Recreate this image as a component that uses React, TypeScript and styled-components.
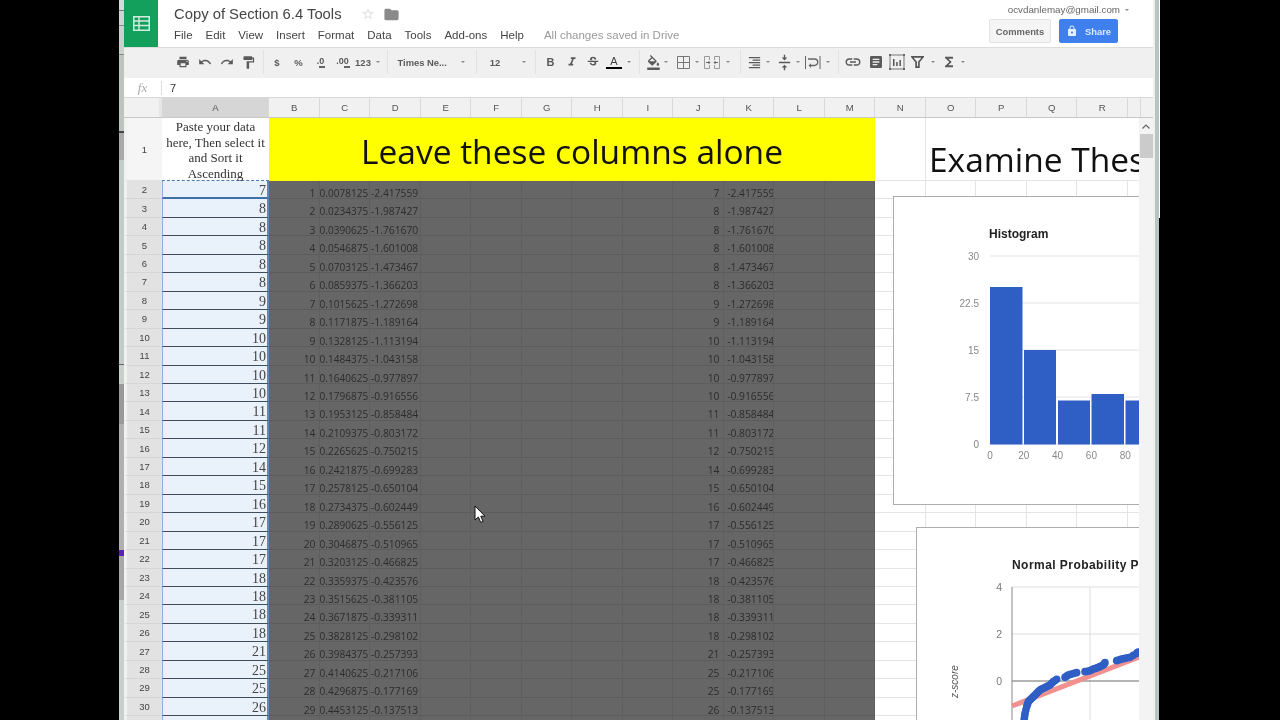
import React from 'react';
import styled, { createGlobalStyle } from 'styled-components';
import {
  MdArticle,
  MdFolder,
  MdFormatAlignRight,
  MdFormatColorFill,
  MdFormatItalic,
  MdFormatPaint,
  MdFunctions,
  MdLink,
  MdLock,
  MdPrint,
  MdRedo,
  MdStarBorder,
  MdStrikethroughS,
  MdUndo,
  MdVerticalAlignCenter,
} from 'react-icons/md';

const SANS = '"Liberation Sans", Arial, sans-serif';
const ROW_HEIGHT = 18.46;
const COL_WIDTH = 50.5;

const GlobalStyle = createGlobalStyle`
  html, body { margin: 0; height: 100%; background: #000; overflow: hidden; }
  #root { height: 720px; filter: blur(0.35px); }
`;

const Screen = styled.div`
  display: flex;
  width: 1280px;
  height: 720px;
  padding-left: 119px;
  box-sizing: border-box;
  background: #000;
  overflow: hidden;
  font-family: ${SANS};
`;

const LeftSliver = styled.div`
  position: relative;
  width: 5px;
  flex: none;
  background: linear-gradient(
    to bottom,
    #d4dad6 0, #d4dad6 10px, #777 10px, #777 11px, #cfd6d2 11px, #cfd6d2 25px, #888 25px, #888 26px,
    #c9d1cd 26px, #c9d1cd 54px, #888 54px, #888 55px, #bcc4c0 55px, #bcc4c0 131px, #444 131px, #444 133px,
    #aaa 133px, #aaa 160px, #c3ccc8 160px, #c3ccc8 364px, #666 364px, #666 365px, #c8d0cc 365px, #c8d0cc 384px,
    #999 384px, #999 424px, #b0b0b0 424px, #b0b0b0 550px, #5a1fc0 550px, #5a1fc0 556px, #a8a8a8 556px, #a8a8a8 600px,
    #c6cfcb 600px, #c6cfcb 720px
  );
`;

const Window = styled.div`
  display: flex;
  flex-direction: column;
  width: 1029px;
  flex: none;
  background: #fff;
  overflow: hidden;
`;

const RightEdge = styled.div`
  width: 7px;
  flex: none;
  background: linear-gradient(
    to right,
    #f0f0f0 0, #f0f0f0 2px, #b8c4c4 2px, #b8c4c4 6px, transparent 6px
  );
  position: relative;

  &::after {
    content: '';
    position: absolute;
    top: 0;
    right: 0;
    width: 1px;
    height: 218px;
    background: #fff;
  }
`;

const Header = styled.header`
  display: flex;
  height: 48px;
  flex: none;
  border-bottom: 1px solid #dcdcdc;
  box-sizing: border-box;
`;

const Logo = styled.div`
  display: flex;
  align-items: center;
  justify-content: center;
  width: 34px;
  background: #12a05c;
`;

const TitleBlock = styled.div`
  display: flex;
  flex-direction: column;
  padding-left: 16px;
`;

const TitleRow = styled.div`
  display: flex;
  align-items: center;
  height: 28px;
`;

const Title = styled.div`
  font-size: 14.8px;
  color: #444;
  width: 187px;
`;

const MenuRow = styled.div`
  display: flex;
  align-items: center;
  gap: 13px;
  height: 14px;
  font-size: 11.5px;
  color: #444;
`;

const SavedNote = styled.span`
  margin-left: 7px;
  color: #999;
`;

const Account = styled.div`
  display: flex;
  flex-direction: column;
  align-items: flex-end;
  margin-left: auto;
  padding-right: 23px;
`;

const Email = styled.div`
  display: flex;
  align-items: center;
  gap: 4px;
  height: 19px;
  font-size: 9.8px;
  color: #666;
`;

const ButtonRow = styled.div`
  display: flex;
  gap: 8px;
  padding-right: 12px;
`;

const Button = styled.div<{ $primary?: boolean }>`
  display: flex;
  align-items: center;
  justify-content: center;
  gap: 7px;
  height: 24px;
  width: ${(p) => (p.$primary ? 59 : 62)}px;
  box-sizing: border-box;
  border-radius: 2px;
  font-size: 9.4px;
  font-weight: 700;
  color: ${(p) => (p.$primary ? '#dbe8fd' : '#666')};
  background: ${(p) => (p.$primary ? '#3f80ee' : '#f5f5f5')};
  border: 1px solid ${(p) => (p.$primary ? '#3f80ee' : '#e2e2e2')};
`;

const Toolbar = styled.div`
  display: flex;
  align-items: center;
  height: 30px;
  flex: none;
  box-sizing: border-box;
  padding: 0 0 2px 47.5px;
  background: #f0f0f0;
  color: #555;
`;

const Tool = styled.div<{ $w: number; $l?: number }>`
  display: flex;
  align-items: center;
  justify-content: center;
  position: relative;
  flex: none;
  width: ${(p) => p.$w}px;
  margin-left: ${(p) => p.$l ?? 0}px;
  font-size: 9.5px;
  font-weight: 700;
  color: #5a5a5a;
`;

const FontName = styled(Tool)`
  justify-content: flex-start;
  font-size: 9.4px;
`;

const BoldGlyph = styled(Tool)`
  font-size: 11px;
`;

const Caret = styled.div<{ $w: number }>`
  display: flex;
  justify-content: center;
  flex: none;
  width: ${(p) => p.$w}px;

  &::after {
    content: '';
    border-left: 2px solid transparent;
    border-right: 2px solid transparent;
    border-top: 2px solid #888;
  }
`;

const Sep = styled.div<{ $l: number; $r: number }>`
  width: 1px;
  height: 24px;
  flex: none;
  margin: 0 ${(p) => p.$r}px 0 ${(p) => p.$l}px;
  background: #e2e2e2;
`;

const Decimal = styled.span`
  position: relative;
  font-size: 9px;
  padding-bottom: 3px;

  &::after {
    content: '';
    position: absolute;
    right: -1px;
    bottom: 1px;
    width: 6px;
    height: 2px;
    background: #666;
  }
`;

const ColorA = styled.span`
  font-size: 11px;
  font-weight: 400;
  padding: 0 4px;
  color: #444;
  border-bottom: 2.5px solid #000;
  line-height: 12px;
`;

const FormulaBar = styled.div`
  display: flex;
  align-items: center;
  height: 20px;
  flex: none;
  background: #fff;
  border-bottom: 1px solid #d8d8d8;
  box-sizing: border-box;
  font-size: 11px;
  color: #333;
`;

const FxLabel = styled.div`
  width: 37px;
  text-align: center;
  font-family: "Liberation Serif", serif;
  font-style: italic;
  font-size: 13px;
  color: #aaa;
  border-right: 1px solid #ddd;
  line-height: 14px;
  margin-right: 8px;
`;

const ColumnHeaders = styled.div`
  display: flex;
  height: 20px;
  flex: none;
  background: #f1f1f1;
  border-bottom: 1px solid #c8c8c8;
  box-sizing: border-box;
`;

const Corner = styled.div`
  width: 38px;
  flex: none;
  box-sizing: border-box;
  border-right: 3px solid #e6e6e6;
`;

const ColHead = styled.div<{ $w: number; $active?: boolean }>`
  display: flex;
  align-items: center;
  justify-content: center;
  flex: none;
  width: ${(p) => p.$w}px;
  box-sizing: border-box;
  padding-left: 1px;
  font-size: 9.6px;
  color: #555;
  background: ${(p) => (p.$active ? '#d6d6d6' : 'transparent')};
  border-right: 1px solid #d9d9d9;
`;

const SheetBody = styled.div`
  display: flex;
  flex: 1;
  min-height: 0;
`;

const GridArea = styled.div`
  position: relative;
  flex: 1;
  min-width: 0;
  overflow: hidden;
`;

const Row = styled.div<{ $h: number }>`
  display: flex;
  height: ${(p) => p.$h}px;
`;

const RowHead = styled.div<{ $first?: boolean }>`
  display: flex;
  align-items: center;
  justify-content: center;
  flex: none;
  width: 38px;
  box-sizing: border-box;
  font-size: 9.5px;
  color: #444;
  background: ${(p) => (p.$first ? '#f5f5f5' : '#e2e2e2')};
  border-left: 3px solid #f0f2f1;
  border-bottom: 1px solid ${(p) => (p.$first ? '#e2e2e2' : '#d6d6d6')};
`;

const PromptCell = styled.div`
  width: 107px;
  flex: none;
  box-sizing: border-box;
  padding-top: 1px;
  text-align: center;
  font-family: "Liberation Serif", serif;
  font-size: 13px;
  line-height: 15.6px;
  white-space: nowrap;
  color: #333;
  border-bottom: 1px dashed #4a7ab5;
`;

const ValueCell = styled.div<{ $active?: boolean }>`
  width: 107px;
  flex: none;
  box-sizing: border-box;
  padding-right: 1px;
  text-align: right;
  font-family: "Liberation Serif", serif;
  font-size: 14px;
  line-height: 20px;
  color: #444;
  background: #e9f1fb;
  border-left: 1px solid #8fb0d8;
  border-right: 2px solid #6288ba;
  border-bottom: ${(p) => (p.$active ? '2px solid #3f6fa8' : '1px solid #3f4d5c')};
`;

const Banner = styled.div`
  display: flex;
  align-items: center;
  justify-content: center;
  width: ${12 * COL_WIDTH}px;
  flex: none;
  padding-top: 3px;
  box-sizing: border-box;
  background: #ffff00;
  font-family: "Open Sans", sans-serif;
  font-size: 33.5px;
  color: #111;
`;

const BlankCell = styled.div`
  width: ${COL_WIDTH}px;
  flex: none;
  box-sizing: border-box;
  border-right: 1px solid #e4e4e4;
  border-bottom: 1px solid #e4e4e4;
`;

const ExamineCell = styled.div`
  display: flex;
  align-items: flex-end;
  flex: 1;
  padding: 0 0 1px 3.5px;
  white-space: nowrap;
  overflow: hidden;
  font-family: "Open Sans", sans-serif;
  font-size: 33.5px;
  line-height: 40px;
  color: #111;
  border-bottom: 1px solid #e4e4e4;
`;

const DarkCell = styled.div<{ $align?: 'left' | 'right' }>`
  width: ${COL_WIDTH}px;
  flex: none;
  box-sizing: border-box;
  padding: ${(p) => (p.$align === 'right' ? '0 3px 0 0' : '0 0 0 1px')};
  overflow: hidden;
  white-space: nowrap;
  text-align: ${(p) => p.$align ?? 'left'};
  font-family: "Open Sans", sans-serif;
  font-size: 10.3px;
  line-height: 24px;
  color: #2c2c2c;
  background: #666;
  border-right: 1px solid #5f5f5f;
  border-bottom: 1px solid #5c5c5c;
`;

const ProbabilityCell = styled(DarkCell)`
  padding: 0;
  font-size: 10px;
  letter-spacing: 0.05px;
`;

const ChartCard = styled.div<{ $x: number; $y: number; $w: number; $h: number }>`
  position: absolute;
  left: ${(p) => p.$x - 124}px;
  top: ${(p) => p.$y - 118}px;
  width: ${(p) => p.$w}px;
  height: ${(p) => p.$h}px;
  background: #fff;
  border: 1px solid #adadad;
  svg { display: block; }
`;

const Scrollbar = styled.div`
  position: relative;
  width: 14px;
  flex: none;
  background: #f3f3f3;
`;

const ScrollArrow = styled.svg`
  display: block;
  margin: 6px auto 0;
`;

const ScrollThumb = styled.div`
  position: absolute;
  top: 16px;
  left: 1px;
  right: 0;
  height: 24px;
  background: #cbcbcb;
`;

const Pointer = styled.svg`
  position: absolute;
  left: 474px;
  top: 505px;
`;

const StarIcon = styled(MdStarBorder)`
  color: #ddd;
`;

const FolderIcon = styled(MdFolder)`
  color: #8a8a8a;
  margin-left: 8px;
`;

const values = [7, 8, 8, 8, 8, 8, 9, 9, 10, 10, 10, 10, 11, 11, 12, 14, 15, 16, 17, 17, 17, 18, 18, 18, 18, 21, 25, 25, 26];

const zScores = [
  '-2.417559', '-1.987427', '-1.761670', '-1.601008', '-1.473467', '-1.366203', '-1.272698', '-1.189164',
  '-1.113194', '-1.043158', '-0.977897', '-0.916556', '-0.858484', '-0.803172', '-0.750215', '-0.699283',
  '-0.650104', '-0.602449', '-0.556125', '-0.510965', '-0.466825', '-0.423576', '-0.381105', '-0.339311',
  '-0.298102', '-0.257393', '-0.217106', '-0.177169', '-0.137513',
];

const columns = 'BCDEFGHIJKLMNOPQRS'.split('');

const iconStroke = { fill: 'none', stroke: '#777', strokeWidth: 1 };

const SheetLogo = () => (
  <svg width="17" height="15" viewBox="0 0 17 15">
    <rect x="0.75" y="0.75" width="15.5" height="13.5" fill="none" stroke="#d4ecdf" strokeWidth="1.5" />
    <path d="M1 5h15M1 9.5h15M6 1v13" stroke="#d4ecdf" strokeWidth="1.4" />
  </svg>
);

const BordersIcon = () => (
  <svg width="13" height="13" viewBox="0 0 13 13">
    <path d="M.5.5h12v12H.5zM6.5.5v12M.5 6.5h12" {...iconStroke} />
  </svg>
);

const MergeIcon = () => (
  <svg width="16" height="13" viewBox="0 0 16 13">
    <path d="M5.5 4V.5H.5v12h5V9M10.5 4V.5h5v12h-5V9" fill="none" stroke="#999" />
    <path d="M2 6.5h3.5M14 6.5h-3.5" stroke="#666" />
    <path d="M4.5 4.5l2 2-2 2zM11.5 4.5l-2 2 2 2z" fill="#666" />
  </svg>
);

const WrapIcon = () => (
  <svg width="16" height="13" viewBox="0 0 16 13">
    <path d="M.5 0v13M15 0v13" stroke="#666" />
    <path d="M3 3h6.5a3 3 0 0 1 0 6.5H5" fill="none" stroke="#666" strokeWidth="1.3" />
    <path d="M6 7.2L3.5 9.5 6 12z" fill="#666" />
  </svg>
);

const ChartIcon = () => (
  <svg width="16" height="16" viewBox="0 0 16 16">
    <rect x="1" y="1" width="14" height="14" fill="none" stroke="#777" />
    <path d="M0 0h2v2H0zM14 0h2v2h-2zM0 14h2v2H0zM14 14h2v2h-2z" fill="#666" />
    <path d="M4 5h1.5v7H4zM7.2 8h1.5v4H7.2zM10.4 6h1.5v6h-1.5z" fill="#555" />
  </svg>
);

const FilterIcon = () => (
  <svg width="13" height="12" viewBox="0 0 14 13">
    <path d="M1 1h12L8.5 6.5V12h-3V6.5z" fill="none" stroke="#555" strokeWidth="1.8" />
  </svg>
);

const HistogramChart = () => {
  const bars = [
    [990, 1022.5, 287],
    [1024, 1056, 350],
    [1058, 1090, 400.5],
    [1091.5, 1124, 394],
    [1125.5, 1160, 400.5],
  ];
  const ticks = [
    ['30', 256],
    ['22.5', 303],
    ['15', 350],
    ['7.5', 397],
    ['0', 444],
  ] as const;
  return (
    <svg width="260" height="307" viewBox="894 197 260 307" fontFamily={SANS}>
      <text x="989" y="237.5" fontSize="12" fontWeight="700" fill="#222">Histogram</text>
      {ticks.map(([label, y]) => (
        <g key={label}>
          <line x1="990" x2="1154" y1={y} y2={y} stroke="#e2e2e2" />
          <text x="979" y={y + 3.5} fontSize="10" textAnchor="end" fill="#888">{label}</text>
        </g>
      ))}
      {bars.map(([a, b, top]) => (
        <rect key={a} x={a} y={top} width={b - a} height={444.5 - top} fill="#2f5ec4" />
      ))}
      {[0, 20, 40, 60, 80].map((label, i) => (
        <text key={label} x={990 + i * 33.8} y="458.5" fontSize="10" textAnchor="middle" fill="#888">{label}</text>
      ))}
    </svg>
  );
};

// traced from the plot, x/y in crop units of the chart corner
const probabilityTrace = [
  [432, 610], [433, 595], [435, 580], [440, 560], [445, 545], [452, 538], [460, 530], [470, 520], [480, 510],
  [490, 505], [500, 500], [510, 495], [520, 485], [530, 478], [555, 472], [565, 465], [575, 462], [590, 458],
  [615, 455], [628, 453], [640, 447], [650, 444], [660, 440], [670, 435], [675, 428], [710, 422], [722, 418],
  [735, 415], [750, 412], [770, 400], [775, 396],
];

const probabilityPoints = probabilityTrace
  .flatMap(([x, y], i) => {
    const next = probabilityTrace[i + 1];
    if (!next || next[0] - x > 20) return [[x, y]];
    return [[x, y], [(x + next[0]) / 2, (y + next[1]) / 2]];
  })
  .map(([x, y]) => [880 + x / 3, 520 + y / 3]);

const ProbabilityChart = () => (
  <svg width="240" height="200" viewBox="917 528 240 200" fontFamily={SANS}>
    <text x="1012" y="569" fontSize="12" fontWeight="700" letterSpacing="0.45" fill="#222">Normal Probability Plot</text>
    <path d="M1012 587H1160M1012 634H1160M1090 587V730" stroke="#dedede" fill="none" />
    <line x1="1012" x2="1160" y1="681" y2="681" stroke="#6a6a6a" />
    <line x1="1012" x2="1012" y1="587" y2="730" stroke="#888" />
    <line x1="1012" y1="706" x2="1139" y2="657" stroke="#f28f8f" strokeWidth="5" />
    {probabilityPoints.map(([x, y]) => (
      <circle key={`${x}-${y}`} cx={x} cy={y} r="3.8" fill="#2f5ec4" />
    ))}
    {[['4', 587], ['2', 634], ['0', 681]].map(([label, y]) => (
      <text key={label} x="1002" y={Number(y) + 3.5} fontSize="10.5" textAnchor="end" fill="#777">{label}</text>
    ))}
    <text transform="translate(958 698) rotate(-90)" fontSize="10" fontStyle="italic" fill="#555">z-score</text>
  </svg>
);

const DataRow = ({ n }: { n: number }) => {
  const i = n - 2;
  const hasData = i < values.length;
  return (
    <Row $h={ROW_HEIGHT}>
      <RowHead>{hasData ? n : ''}</RowHead>
      <ValueCell $active={n === 2}>{hasData ? values[i] : ''}</ValueCell>
      {columns.slice(0, 12).map((c) => {
        if (!hasData) return <DarkCell key={c} />;
        if (c === 'B') return <DarkCell key={c} $align="right">{i + 1}</DarkCell>;
        if (c === 'C') return <ProbabilityCell key={c}>{((2 * i + 1) / 128).toFixed(7)}</ProbabilityCell>;
        if (c === 'D') return <DarkCell key={c}>{zScores[i]}</DarkCell>;
        if (c === 'K') return <DarkCell key={c}>&nbsp;{zScores[i]}</DarkCell>;
        if (c === 'J') return <DarkCell key={c} $align="right">{values[i]}</DarkCell>;
        return <DarkCell key={c} />;
      })}
      {columns.slice(12).map((c) => <BlankCell key={c} />)}
    </Row>
  );
};

const rowNumbers = Array.from({ length: 30 }, (_, i) => i + 2);

const App: React.FC = () => (
  <>
    <GlobalStyle />
    <Screen>
      <LeftSliver />
      <Window>
        <Header>
          <Logo><SheetLogo /></Logo>
          <TitleBlock>
            <TitleRow>
              <Title>Copy of Section 6.4 Tools</Title>
              <StarIcon size={14} />
              <FolderIcon size={17} />
            </TitleRow>
            <MenuRow>
              <span>File</span>
              <span>Edit</span>
              <span>View</span>
              <span>Insert</span>
              <span>Format</span>
              <span>Data</span>
              <span>Tools</span>
              <span>Add-ons</span>
              <span>Help</span>
              <SavedNote>All changes saved in Drive</SavedNote>
            </MenuRow>
          </TitleBlock>
          <Account>
            <Email>
              ocvdanlemay@gmail.com
              <Caret $w={6} />
            </Email>
            <ButtonRow>
              <Button>Comments</Button>
              <Button $primary><MdLock size={12} color="#e6efff" />Share</Button>
            </ButtonRow>
          </Account>
        </Header>

        <Toolbar>
          <Tool $w={22}><MdPrint size={14} /></Tool>
          <Tool $w={22}><MdUndo size={14} /></Tool>
          <Tool $w={22}><MdRedo size={14} /></Tool>
          <Tool $w={22}><MdFormatPaint size={15} /></Tool>
          <Sep $l={3} $r={3} />
          <Tool $w={21}>$</Tool>
          <Tool $w={22}>%</Tool>
          <Tool $w={22}><Decimal>.0</Decimal></Tool>
          <Tool $w={22}><Decimal>.00</Decimal></Tool>
          <Tool $w={19}>123</Tool>
          <Caret $w={10} />
          <Sep $l={4} $r={10} />
          <FontName $w={60.5}>Times Ne...</FontName>
          <Caret $w={10} />
          <Sep $l={7.5} $r={0} />
          <Tool $w={37}>12</Tool>
          <Caret $w={21} />
          <Sep $l={0.5} $r={3.5} />
          <BoldGlyph $w={22}>B</BoldGlyph>
          <Tool $w={21}><MdFormatItalic size={14} /></Tool>
          <Tool $w={21}><MdStrikethroughS size={14} /></Tool>
          <Tool $w={21}><ColorA>A</ColorA></Tool>
          <Caret $w={9} />
          <Sep $l={5.5} $r={2.5} />
          <Tool $w={21}><MdFormatColorFill size={15} /></Tool>
          <Caret $w={5} />
          <Tool $w={22} $l={3.5}><BordersIcon /></Tool>
          <Caret $w={6} />
          <Tool $w={22} $l={1}><MergeIcon /></Tool>
          <Caret $w={10} />
          <Sep $l={6.5} $r={3} />
          <Tool $w={21}><MdFormatAlignRight size={15} /></Tool>
          <Caret $w={7} />
          <Tool $w={22} $l={1.5}><MdVerticalAlignCenter size={17} /></Tool>
          <Caret $w={6} />
          <Tool $w={22} $l={1}><WrapIcon /></Tool>
          <Caret $w={8} />
          <Sep $l={6} $r={3} />
          <Tool $w={22}><MdLink size={18} /></Tool>
          <Tool $w={22} $l={1}><MdArticle size={16} /></Tool>
          <Tool $w={20}><ChartIcon /></Tool>
          <Tool $w={20}><FilterIcon /></Tool>
          <Caret $w={12} />
          <Tool $w={20}><MdFunctions size={16} /></Tool>
          <Caret $w={8} />
        </Toolbar>

        <FormulaBar>
          <FxLabel>fx</FxLabel>
          7
        </FormulaBar>

        <ColumnHeaders>
          <Corner />
          <ColHead $w={107} $active>A</ColHead>
          {columns.slice(0, -1).map((c) => <ColHead key={c} $w={COL_WIDTH}>{c}</ColHead>)}
          <ColHead $w={13} />
        </ColumnHeaders>

        <SheetBody>
          <GridArea>
            <Row $h={63}>
              <RowHead $first>1</RowHead>
              <PromptCell>Paste your data<br />here, Then select it<br />and Sort it<br />Ascending</PromptCell>
              <Banner>Leave these columns alone</Banner>
              <BlankCell />
              <ExamineCell>Examine These</ExamineCell>
            </Row>
            {rowNumbers.map((n) => <DataRow key={n} n={n} />)}
            <ChartCard $x={893} $y={196} $w={300} $h={307}><HistogramChart /></ChartCard>
            <ChartCard $x={916} $y={527} $w={300} $h={260}><ProbabilityChart /></ChartCard>
          </GridArea>
          <Scrollbar>
            <ScrollArrow width="8" height="5" viewBox="0 0 8 5">
              <path d="M.5 4.5L4 1l3.5 3.5" fill="none" stroke="#666" strokeWidth="1.2" />
            </ScrollArrow>
            <ScrollThumb />
          </Scrollbar>
        </SheetBody>
      </Window>
      <RightEdge />
      <Pointer width="12" height="19" viewBox="0 0 12 19">
        <path d="M1 1v14l3.4-3 2.3 5.4 2.4-1-2.3-5.2H11z" fill="#fff" stroke="#111" strokeWidth="1" />
      </Pointer>
    </Screen>
  </>
);

export default App;
